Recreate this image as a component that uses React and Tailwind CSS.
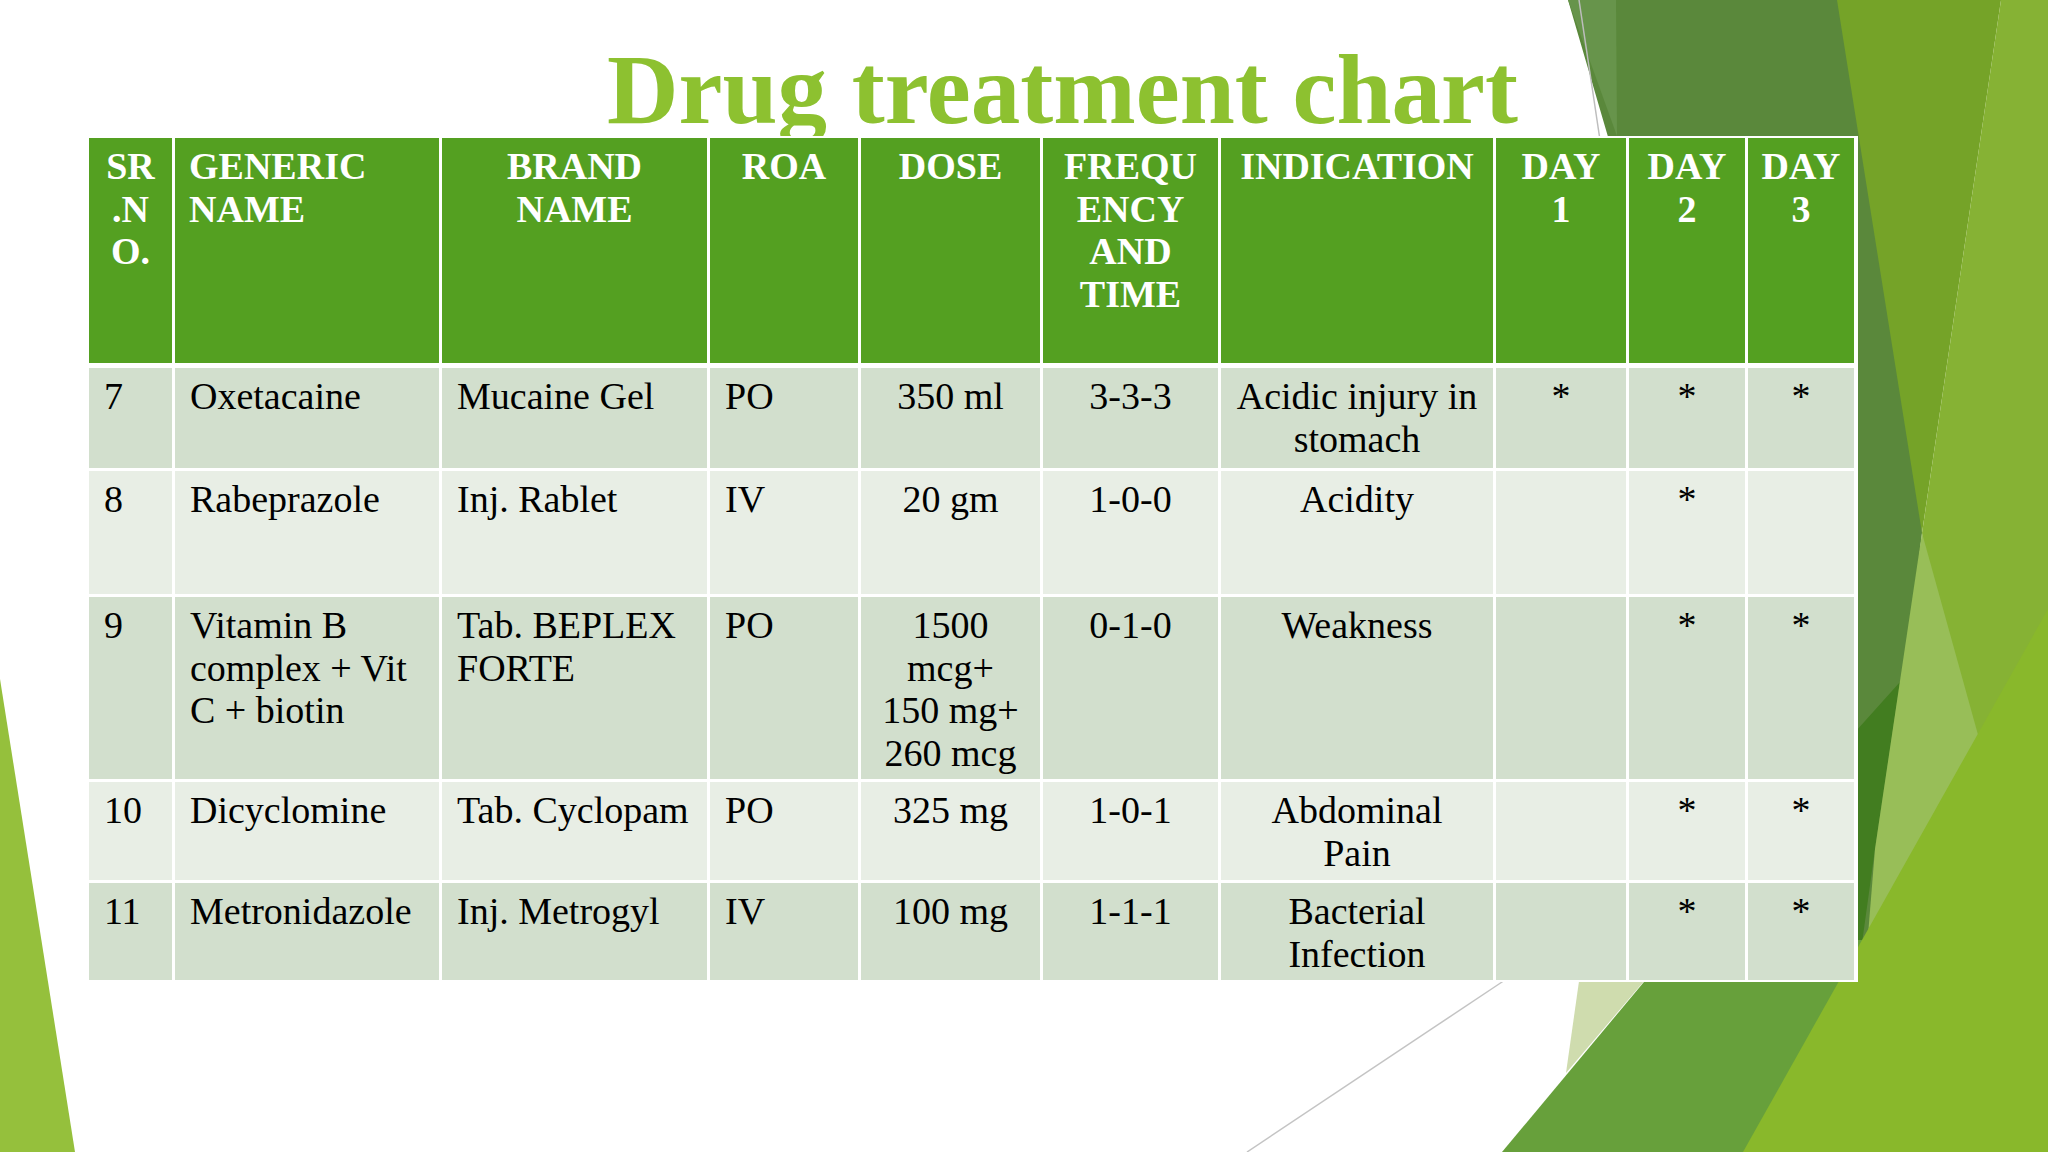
import React from "react";

const COLS =
  "grid grid-cols-[83px_264px_265px_148px_179px_175px_272px_130px_116px_106px] gap-x-[3px]";

const DARK = "bg-[#d2dfcd]";
const LIGHT = "bg-[#e8eee5]";

const header = [
  { t: ["SR", ".N", "O."], a: "c" },
  { t: ["GENERIC", "NAME"], a: "l" },
  { t: ["BRAND", "NAME"], a: "c" },
  { t: ["ROA"], a: "c" },
  { t: ["DOSE"], a: "c" },
  { t: ["FREQU", "ENCY", "AND", "TIME"], a: "c" },
  { t: ["INDICATION"], a: "c" },
  { t: ["DAY", "1"], a: "c" },
  { t: ["DAY", "2"], a: "c" },
  { t: ["DAY", "3"], a: "c" },
];

const bodyAlign = ["l", "l", "l", "l", "c", "c", "c", "c", "c", "c"];

const rows = [
  {
    h: "h-[100px]",
    bg: DARK,
    cells: ["7", "Oxetacaine", "Mucaine Gel", "PO", "350 ml", "3-3-3", ["Acidic injury in", "stomach"], "*", "*", "*"],
  },
  {
    h: "h-[123px]",
    bg: LIGHT,
    cells: ["8", "Rabeprazole", "Inj. Rablet", "IV", "20 gm", "1-0-0", "Acidity", "", "*", ""],
  },
  {
    h: "h-[182px]",
    bg: DARK,
    cells: [
      "9",
      ["Vitamin B", "complex + Vit", "C + biotin"],
      ["Tab. BEPLEX", "FORTE"],
      "PO",
      ["1500", "mcg+", "150 mg+", "260 mcg"],
      "0-1-0",
      "Weakness",
      "",
      "*",
      "*",
    ],
  },
  {
    h: "h-[98px]",
    bg: LIGHT,
    cells: ["10", "Dicyclomine", "Tab. Cyclopam", "PO", "325 mg", "1-0-1", ["Abdominal", "Pain"], "", "*", "*"],
  },
  {
    h: "h-[97px]",
    bg: DARK,
    cells: ["11", "Metronidazole", "Inj. Metrogyl", "IV", "100 mg", "1-1-1", ["Bacterial", "Infection"], "", "*", "*"],
  },
];

function Lines({ t }) {
  const arr = Array.isArray(t) ? t : [t];
  return arr.map((line, i) => (
    <div key={i} className="whitespace-nowrap">
      {line}
    </div>
  ));
}

function Background() {
  return (
    <svg
      className="absolute inset-0"
      width="2048"
      height="1152"
      viewBox="0 0 2048 1152"
    >
      {/* bottom-left facet */}
      <polygon points="0,679 75,1152 0,1152" fill="#95c03c" />
      {/* right dark facet */}
      <polygon points="1568,0 1905,0 1922,533 1885,849 1880,985 1856,985" fill="#5a883b" />
      <polygon points="1568,0 1616,0 1617,136" fill="#67944b" />
      <polygon points="1856,731 1900,682 1875,849 1862,943 1856,950" fill="#427d20" />
      {/* top-right yellow-green facets (extended under the bright facet to avoid seams) */}
      <polygon points="1837,0 2001,0 1922,533" fill="#75a328" />
      <polygon points="2001,0 2048,0 2048,820 1950,820 1922,533" fill="#86b234" />
      <polygon points="1922,533 1985,760 1890,1000 1866,960 1875,849" fill="#98be58" />
      {/* bottom facets */}
      <polygon points="1582,960 1662,960 1566,1073" fill="#cfdcae" />
      <polygon points="1679,940 1880,940 1770,1152 1502,1152" fill="#67a03b" />
      <polygon points="2048,609 2048,1152 1743,1152" fill="#89b82b" />
      {/* thin lines */}
      <line x1="1579" y1="0" x2="1600" y2="140" stroke="#bdbdbd" strokeWidth="1.5" />
      <line x1="1247" y1="1152" x2="1505" y2="980" stroke="#c4c4c4" strokeWidth="1.5" />
    </svg>
  );
}

export default function App() {
  return (
    <div
      className="relative w-[2048px] h-[1152px] overflow-hidden bg-white"
      style={{ fontFamily: '"Liberation Serif", "Times New Roman", serif' }}
    >
      <Background />
      <div className="relative flex flex-col">
        <div className="h-[136px] pt-[41px] pl-[607px]">
          <div className="text-[99px] leading-[98px] font-bold text-[#8dc130] whitespace-nowrap">
            Drug treatment chart
          </div>
        </div>
        <div className="relative ml-[89px] w-[1769px] flex flex-col gap-[3px] bg-white border-t-2 border-r-2 border-b-2 border-white">
          <div className={`${COLS} h-[225px] mb-[2px]`}>
            {header.map((c, i) => (
              <div
                key={i}
                className={`bg-[#54a021] text-white font-bold text-[38px] leading-[42.5px] pt-[7px] ${
                  c.a === "c" ? "text-center px-[4px]" : "text-left pl-[14px]"
                }`}
              >
                <Lines t={c.t} />
              </div>
            ))}
          </div>
          {rows.map((r, ri) => (
            <div key={ri} className={`${COLS} ${r.h}`}>
              {r.cells.map((c, ci) => (
                <div
                  key={ci}
                  className={`${r.bg} text-black text-[38px] leading-[42.5px] pt-[7px] ${
                    bodyAlign[ci] === "c" ? "text-center px-[4px]" : "text-left pl-[15px]"
                  }`}
                >
                  <Lines t={c} />
                </div>
              ))}
            </div>
          ))}
        </div>
      </div>
    </div>
  );
}
